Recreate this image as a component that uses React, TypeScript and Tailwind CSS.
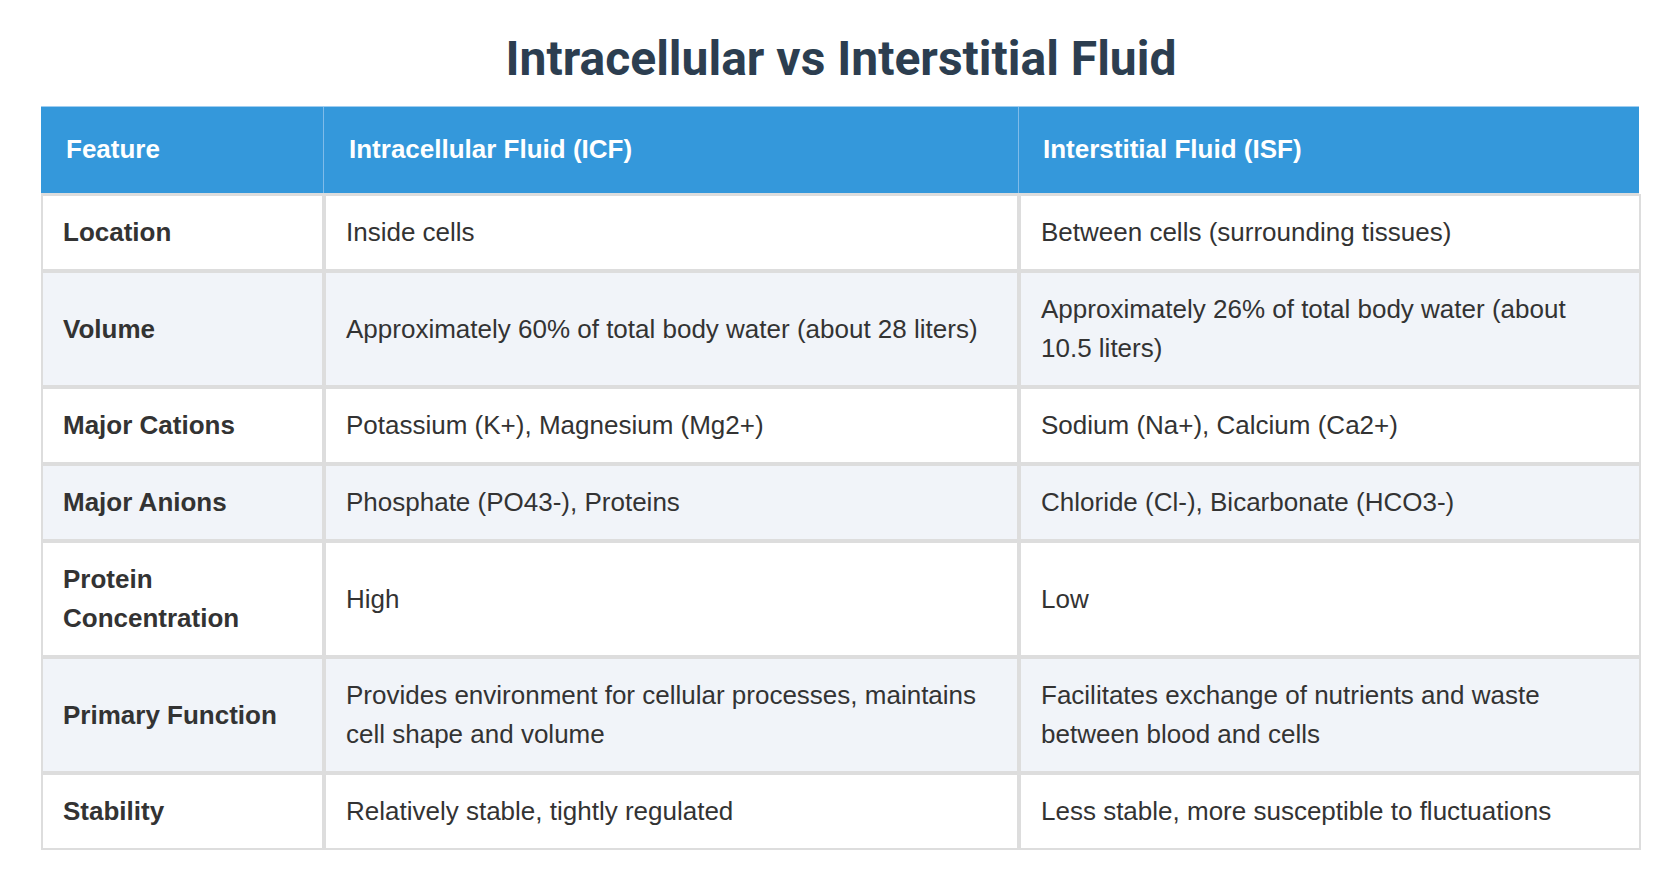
import React from "react";

const rows: { f: string; icf: string; isf: string }[] = [
  { f: "Location", icf: "Inside cells", isf: "Between cells (surrounding tissues)" },
  {
    f: "Volume",
    icf: "Approximately 60% of total body water (about 28 liters)",
    isf: "Approximately 26% of total body water (about 10.5 liters)",
  },
  { f: "Major Cations", icf: "Potassium (K+), Magnesium (Mg2+)", isf: "Sodium (Na+), Calcium (Ca2+)" },
  { f: "Major Anions", icf: "Phosphate (PO43-), Proteins", isf: "Chloride (Cl-), Bicarbonate (HCO3-)" },
  { f: "Protein Concentration", icf: "High", isf: "Low" },
  {
    f: "Primary Function",
    icf: "Provides environment for cellular processes, maintains cell shape and volume",
    isf: "Facilitates exchange of nutrients and waste between blood and cells",
  },
  { f: "Stability", icf: "Relatively stable, tightly regulated", isf: "Less stable, more susceptible to fluctuations" },
];

export default function App() {
  return (
    <div className="w-[1680px] h-[892px] bg-white pt-[31px] pl-[41px] pr-[39px] font-['Liberation_Sans',Arial,sans-serif]">
      <h1 className="text-center text-[48px] leading-[56px] font-bold text-[#2c3e50] font-['Roboto',sans-serif] mb-[19px]">
        Intracellular vs Interstitial Fluid
      </h1>
      <div className="w-[1600px]">
        <div className="mr-[2px] grid grid-cols-[282px_695px_1fr] bg-[#3498db] border-t border-t-[#9fcdf0] border-b border-b-[#dddddd] text-white text-[26px] leading-[39px] font-bold">
          <div className="pl-[25px] pt-[23px] pb-[24px]">Feature</div>
          <div className="pl-[25px] pt-[23px] pb-[24px] border-l border-l-[#7fbbe9]">Intracellular Fluid (ICF)</div>
          <div className="pl-[24px] pt-[23px] pb-[24px] border-l border-l-[#7fbbe9]">Interstitial Fluid (ISF)</div>
        </div>
        {rows.map((r, i) => {
          const bg = i % 2 === 1 ? "bg-[#f1f4f9]" : "bg-white";
          return (
            <div key={r.f} className={`grid grid-cols-[283px_695px_1fr] text-[26px] leading-[39px] text-[#333333] ${bg}`}>
              <div className="border-2 border-[#dddddd] px-[20px] py-[17px] flex items-center font-bold">{r.f}</div>
              <div className="border-2 border-[#dddddd] px-[20px] py-[17px] flex items-center">{r.icf}</div>
              <div className="border-2 border-[#dddddd] px-[20px] py-[17px] flex items-center">{r.isf}</div>
            </div>
          );
        })}
      </div>
    </div>
  );
}
